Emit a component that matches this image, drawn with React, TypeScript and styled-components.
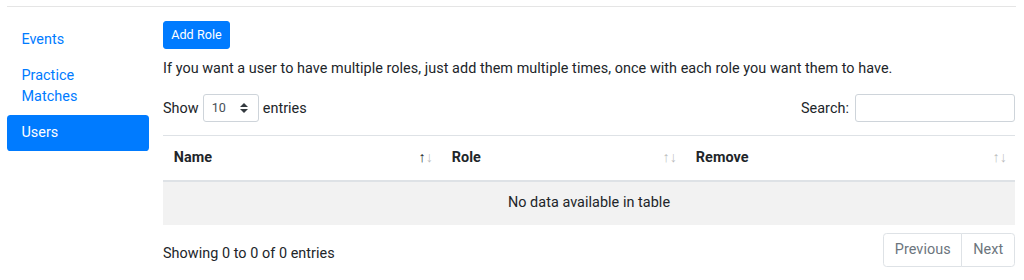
import React from "react";
import styled, { createGlobalStyle } from "styled-components";

const GlobalStyle = createGlobalStyle`
  html, body {
    margin: 0;
    padding: 0;
    background: #fff;
  }
  body {
    font-family: Roboto, "Liberation Sans", Arial, sans-serif;
    font-size: 14.4px;
    line-height: 1.5;
    letter-spacing: 0.05px;
    color: #212529;
  }
  * { box-sizing: border-box; }
`;

const Page = styled.div`
  padding: 0 9px 0 7px;
`;

const Divider = styled.hr`
  margin: 6px -1px 14.4px 0;
  border: 0;
  border-top: 1px solid rgba(0, 0, 0, 0.1);
`;

const Layout = styled.div`
  display: flex;
  gap: 14px;
  align-items: flex-start;
`;

const Sidebar = styled.nav`
  width: 142px;
  flex: 0 0 142px;
  display: flex;
  flex-direction: column;
`;

const NavLink = styled.a<{ $active?: boolean }>`
  display: block;
  padding: 7.2px 20px 7.2px 14.4px;
  line-height: 1.5;
  border-radius: 3.6px;
  text-decoration: none;
  color: ${(p) => (p.$active ? "#fff" : "#007bff")};
  background: ${(p) => (p.$active ? "#007bff" : "transparent")};
  cursor: pointer;
`;

const Main = styled.main`
  flex: 1;
  min-width: 0;
`;

const PrimaryButton = styled.button`
  display: inline-block;
  font-family: inherit;
  font-size: 12.6px;
  line-height: 1.5;
  letter-spacing: inherit;
  padding: 3.6px 7.2px;
  border: 1px solid #007bff;
  border-radius: 3px;
  background: #007bff;
  color: #fff;
  cursor: pointer;
`;

const Intro = styled.p`
  margin: 9px 0 14.4px;
`;

const ControlsRow = styled.div`
  display: flex;
  justify-content: space-between;
  align-items: center;
`;

const InlineLabel = styled.label`
  display: flex;
  align-items: center;
  gap: 4px;
  white-space: nowrap;
`;

const SelectBox = styled.div`
  width: 56px;
  height: 28px;
  display: flex;
  align-items: center;
  justify-content: space-between;
  padding: 0 10px 0 8px;
  border: 1px solid #ced4da;
  border-radius: 3px;
  font-size: 12.6px;
  color: #495057;
  background: #fff;
`;

const SearchInput = styled.input`
  width: 160px;
  height: 28px;
  margin-left: 2px;
  padding: 3.6px 7.2px;
  border: 1px solid #ced4da;
  border-radius: 3px;
  font-family: inherit;
  font-size: 12.6px;
  outline: none;
`;

const Table = styled.table`
  width: 100%;
  margin: 13px 0 6px;
  border-collapse: collapse;
  table-layout: fixed;
`;

const Th = styled.th`
  text-align: left;
  font-weight: 700;
  padding: 10.8px 8px 10.8px 10.8px;
  border-top: 1px solid #dee2e6;
  border-bottom: 2px solid #dee2e6;
  vertical-align: bottom;
`;

const ThInner = styled.div`
  display: flex;
  justify-content: space-between;
  align-items: center;
`;

const Arrows = styled.span`
  display: flex;
  font-weight: 400;
  font-family: "Liberation Sans", Arial, sans-serif;
  font-size: 14.4px;
  letter-spacing: 0;
`;

const Arrow = styled.span<{ $on?: boolean }>`
  color: #212529;
  opacity: ${(p) => (p.$on ? 1 : 0.3)};
`;

const EmptyCell = styled.td`
  text-align: center;
  padding: 10.8px;
  background: #f2f2f2;
  border-top: 1px solid #dee2e6;
`;

const FooterRow = styled.div`
  display: flex;
  justify-content: space-between;
  align-items: flex-start;
`;

const Info = styled.div`
  padding-top: 12.2px;
  white-space: nowrap;
`;

const Pagination = styled.ul`
  display: flex;
  list-style: none;
  margin: 2px 0 0;
  padding: 0;
`;

const PageLink = styled.li<{ $first?: boolean; $last?: boolean }>`
  padding: 7.2px 10.8px;
  line-height: 1.25;
  color: #6c757d;
  border: 1px solid #dee2e6;
  margin-left: ${(p) => (p.$first ? "0" : "-1px")};
  border-radius: ${(p) =>
    p.$first ? "3.6px 0 0 3.6px" : p.$last ? "0 3.6px 3.6px 0" : "0"};
  background: #fff;
`;

const Caret = () => (
  <svg width="8" height="10" viewBox="0 0 4 5" aria-hidden>
    <path fill="#343a40" d="M2 0L0 2h4zm0 5L0 3h4z" />
  </svg>
);

const SortArrows = ({ active }: { active?: boolean }) => (
  <Arrows>
    <Arrow $on={active}>↑</Arrow>
    <Arrow>↓</Arrow>
  </Arrows>
);

export default function App() {
  return (
    <>
      <GlobalStyle />
      <Page>
        <Divider />
        <Layout>
          <Sidebar>
            <NavLink>Events</NavLink>
            <NavLink>Practice Matches</NavLink>
            <NavLink $active>Users</NavLink>
          </Sidebar>
          <Main>
            <PrimaryButton>Add Role</PrimaryButton>
            <Intro>
              If you want a user to have multiple roles, just add them multiple
              times, once with each role you want them to have.
            </Intro>
            <ControlsRow>
              <InlineLabel>
                Show
                <SelectBox>
                  <span>10</span>
                  <Caret />
                </SelectBox>
                entries
              </InlineLabel>
              <InlineLabel>
                Search:
                <SearchInput type="search" />
              </InlineLabel>
            </ControlsRow>
            <Table>
              <colgroup>
                <col style={{ width: 278 }} />
                <col style={{ width: 244 }} />
                <col />
              </colgroup>
              <thead>
                <tr>
                  <Th>
                    <ThInner>
                      Name
                      <SortArrows active />
                    </ThInner>
                  </Th>
                  <Th>
                    <ThInner>
                      Role
                      <SortArrows />
                    </ThInner>
                  </Th>
                  <Th>
                    <ThInner>
                      Remove
                      <SortArrows />
                    </ThInner>
                  </Th>
                </tr>
              </thead>
              <tbody>
                <tr>
                  <EmptyCell colSpan={3}>No data available in table</EmptyCell>
                </tr>
              </tbody>
            </Table>
            <FooterRow>
              <Info>Showing 0 to 0 of 0 entries</Info>
              <Pagination>
                <PageLink $first>Previous</PageLink>
                <PageLink $last>Next</PageLink>
              </Pagination>
            </FooterRow>
          </Main>
        </Layout>
      </Page>
    </>
  );
}
